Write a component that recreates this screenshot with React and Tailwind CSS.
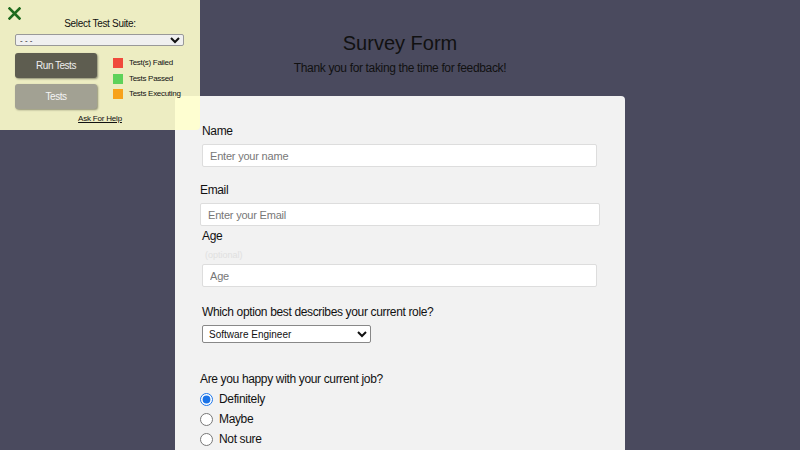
import React from "react";

export default function App() {
  const inputCls =
    "block w-full h-[23px] bg-white border border-[#ddd] rounded-[2px] px-[7px] text-[11px] tracking-[-0.2px] placeholder:text-[#777] outline-none";
  return (
    <div className="relative w-[800px] h-[450px] overflow-hidden bg-[#4a4a5e] font-['Liberation_Sans',Arial,sans-serif]">
      <div className="flex flex-col items-center pt-[32px]">
        <h1 className="text-[20px] leading-[23px] text-[#111]">Survey Form</h1>
        <p className="mt-[6px] text-[12px] leading-[14px] tracking-[-0.35px] text-[#111]">Thank you for taking the time for feedback!</p>
        <div className="mt-[21px] w-[450px] h-[400px] bg-[#f2f2f2] rounded-[4px] px-[25px] pt-[28px] text-[12px] tracking-[-0.35px] text-[#111]">
          <div className="pl-[2px] pr-[3px]">
            <label className="block leading-[14px]">Name</label>
            <input className={"mt-[6px] " + inputCls} placeholder="Enter your name" />
          </div>
          <div className="mt-[16px]">
            <label className="block leading-[14px]">Email</label>
            <input className={"mt-[6px] " + inputCls} placeholder="Enter your Email" />
          </div>
          <div className="pl-[2px] pr-[3px] mt-[3px]">
            <label className="block leading-[14px]">Age</label>
            <div className="mt-[7px] text-[9px] leading-[11px] tracking-normal text-[#e0e0e0] pl-[3px]">(optional)</div>
            <input className={"mt-[3px] " + inputCls} placeholder="Age" />
          </div>
          <div className="pl-[2px] mt-[18px]">
            <label className="block leading-[14px]">Which option best describes your current role?</label>
            <select className="block mt-[6px] w-[169px] h-[18px] bg-white border border-[#888] rounded-[2px] text-[10px] tracking-normal pl-[2px]" defaultValue="se">
              <option value="se">Software Engineer</option>
            </select>
          </div>
          <div className="mt-[29px]">
            <div className="leading-[14px]">Are you happy with your current job?</div>
            <div className="mt-[6px] flex flex-col gap-[6px]">
              {["Definitely", "Maybe", "Not sure"].map((t, i) => (
                <label key={t} className="flex items-center gap-[6px] leading-[14px]">
                  <input type="radio" name="happy" defaultChecked={i === 0} className="m-0 w-[13px] h-[13px] accent-[#1a73e8]" />
                  <span>{t}</span>
                </label>
              ))}
            </div>
          </div>
        </div>
      </div>

      <div className="absolute left-0 top-0 w-[200px] h-[130px] bg-[rgba(255,255,205,0.9)] rounded-br-[4px] text-[#111]">
        <svg className="absolute left-[8px] top-[7px]" width="13" height="13" viewBox="0 0 13 13">
          <path d="M1.5 1.5 L11.5 11.5 M11.5 1.5 L1.5 11.5" stroke="#1f6b1f" strokeWidth="2.6" strokeLinecap="square" />
        </svg>
        <div className="pt-[17px] text-center text-[10px] leading-[13px] tracking-[-0.3px]">Select Test Suite:</div>
        <div className="px-[15px] mt-[4px]">
          <select className="block w-[169px] h-[12px] text-[8px] leading-[10px] bg-[#f0f0f0] border border-[#999] rounded-[2px] p-0" defaultValue="x">
            <option value="x">- - -</option>
          </select>
        </div>
        <div className="flex pl-[15px] mt-[7px]">
          <div className="flex flex-col gap-[6px]">
            <div className="w-[82px] h-[25px] rounded-[3px] bg-[#5e5d50] text-[#eee] text-[10px] tracking-[-0.5px] flex items-center justify-center shadow-[1px_1px_2px_rgba(0,0,0,0.4)]">Run Tests</div>
            <div className="w-[82px] h-[25px] rounded-[3px] bg-[#a2a193] text-[#f4f4f4] text-[10px] tracking-[-0.5px] flex items-center justify-center shadow-[1px_1px_2px_rgba(0,0,0,0.4)]">Tests</div>
          </div>
          <div className="ml-[16px] mt-[5px] flex flex-col gap-[5.5px] text-[8px] leading-[10px] whitespace-nowrap tracking-[-0.3px]">
            <div className="flex items-center gap-[6px]"><span className="w-[10px] h-[10px] bg-[#f04a3c]" />Test(s) Failed</div>
            <div className="flex items-center gap-[6px]"><span className="w-[10px] h-[10px] bg-[#5ed25a]" />Tests Passed</div>
            <div className="flex items-center gap-[6px]"><span className="w-[10px] h-[10px] bg-[#f7a21b]" />Tests Executing</div>
          </div>
        </div>
        <div className="mt-[5px] text-center text-[8px] leading-[10px] underline tracking-[-0.2px]">Ask For Help</div>
      </div>
    </div>
  );
}
